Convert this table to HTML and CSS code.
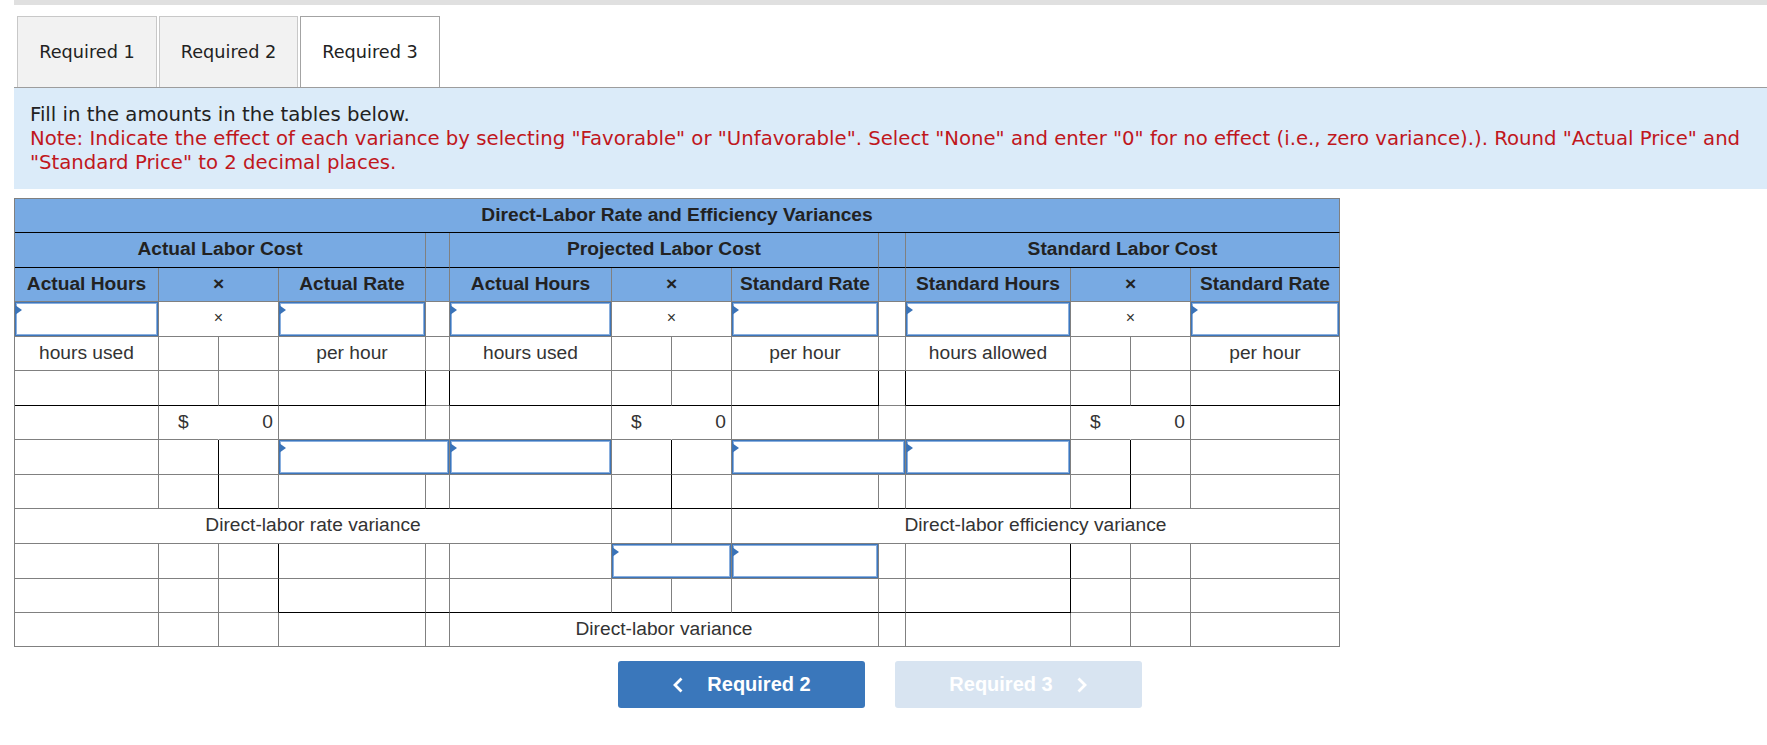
FILE: index.html
```html
<!DOCTYPE html>
<html>
<head>
<meta charset="utf-8">
<link rel="stylesheet" href="styles.css">
</head>
<body>
<div class="page">
  <div class="topbar"></div>
  <div class="tabs">
    <div class="tab">Required 1</div>
    <div class="tab">Required 2</div>
    <div class="tab active">Required 3</div>
  </div>
  <div class="info">
    <p class="lead">Fill in the amounts in the tables below.</p>
    <p class="note">Note: Indicate the effect of each variance by selecting "Favorable" or "Unfavorable". Select "None" and enter "0" for no effect (i.e., zero variance).). Round "Actual Price" and "Standard Price" to 2 decimal places.</p>
  </div>

  <div class="grid">
    <!-- row 1 -->
    <div class="c h span14 bb">Direct-Labor Rate and Efficiency Variances</div>
    <!-- row 2 -->
    <div class="c h span4 bb">Actual Labor Cost</div>
    <div class="c h bb"></div>
    <div class="c h span4 bb">Projected Labor Cost</div>
    <div class="c h bb"></div>
    <div class="c h span4 bb">Standard Labor Cost</div>
    <!-- row 3 -->
    <div class="c h">Actual Hours</div>
    <div class="c h span2">×</div>
    <div class="c h">Actual Rate</div>
    <div class="c h"></div>
    <div class="c h">Actual Hours</div>
    <div class="c h span2">×</div>
    <div class="c h">Standard Rate</div>
    <div class="c h"></div>
    <div class="c h">Standard Hours</div>
    <div class="c h span2">×</div>
    <div class="c h">Standard Rate</div>
    <!-- row 4 -->
    <div class="c"><div class="inp"></div></div>
    <div class="c span2 x">×</div>
    <div class="c"><div class="inp"></div></div>
    <div class="c"></div>
    <div class="c"><div class="inp"></div></div>
    <div class="c span2 x">×</div>
    <div class="c"><div class="inp"></div></div>
    <div class="c"></div>
    <div class="c"><div class="inp"></div></div>
    <div class="c span2 x">×</div>
    <div class="c"><div class="inp"></div></div>
    <!-- row 5 -->
    <div class="c">hours used</div>
    <div class="c"></div>
    <div class="c"></div>
    <div class="c">per hour</div>
    <div class="c"></div>
    <div class="c">hours used</div>
    <div class="c"></div>
    <div class="c"></div>
    <div class="c">per hour</div>
    <div class="c"></div>
    <div class="c">hours allowed</div>
    <div class="c"></div>
    <div class="c"></div>
    <div class="c">per hour</div>
    <!-- row 6 -->
    <div class="c bb"></div>
    <div class="c bb"></div>
    <div class="c bb"></div>
    <div class="c bb br"></div>
    <div class="c br"></div>
    <div class="c bb"></div>
    <div class="c bb"></div>
    <div class="c bb"></div>
    <div class="c bb br"></div>
    <div class="c br"></div>
    <div class="c bb"></div>
    <div class="c bb"></div>
    <div class="c bb"></div>
    <div class="c bb br"></div>
    <!-- row 7 -->
    <div class="c"></div>
    <div class="c dollar nor">$</div>
    <div class="c num">0</div>
    <div class="c"></div>
    <div class="c"></div>
    <div class="c"></div>
    <div class="c dollar nor">$</div>
    <div class="c num">0</div>
    <div class="c"></div>
    <div class="c"></div>
    <div class="c"></div>
    <div class="c dollar nor">$</div>
    <div class="c num">0</div>
    <div class="c"></div>
    <!-- row 8 -->
    <div class="c"></div>
    <div class="c br"></div>
    <div class="c"></div>
    <div class="c span2"><div class="inp"></div></div>
    <div class="c"><div class="inp"></div></div>
    <div class="c br"></div>
    <div class="c"></div>
    <div class="c span2"><div class="inp"></div></div>
    <div class="c"><div class="inp"></div></div>
    <div class="c br"></div>
    <div class="c"></div>
    <div class="c"></div>
    <!-- row 9 -->
    <div class="c"></div>
    <div class="c br"></div>
    <div class="c bb"></div>
    <div class="c bb"></div>
    <div class="c bb"></div>
    <div class="c bb"></div>
    <div class="c bb br"></div>
    <div class="c bb"></div>
    <div class="c bb"></div>
    <div class="c bb"></div>
    <div class="c bb"></div>
    <div class="c bb br"></div>
    <div class="c"></div>
    <div class="c"></div>
    <!-- row 10 -->
    <div class="c span6">Direct-labor rate variance</div>
    <div class="c"></div>
    <div class="c"></div>
    <div class="c span6">Direct-labor efficiency variance</div>
    <!-- row 11 -->
    <div class="c"></div>
    <div class="c"></div>
    <div class="c br"></div>
    <div class="c"></div>
    <div class="c"></div>
    <div class="c"></div>
    <div class="c span2"><div class="inp"></div></div>
    <div class="c"><div class="inp"></div></div>
    <div class="c"></div>
    <div class="c br"></div>
    <div class="c"></div>
    <div class="c"></div>
    <div class="c"></div>
    <!-- row 12 -->
    <div class="c"></div>
    <div class="c"></div>
    <div class="c br"></div>
    <div class="c bb"></div>
    <div class="c bb"></div>
    <div class="c bb"></div>
    <div class="c bb"></div>
    <div class="c bb"></div>
    <div class="c bb"></div>
    <div class="c bb"></div>
    <div class="c bb br"></div>
    <div class="c"></div>
    <div class="c"></div>
    <div class="c"></div>
    <!-- row 13 -->
    <div class="c"></div>
    <div class="c"></div>
    <div class="c"></div>
    <div class="c"></div>
    <div class="c"></div>
    <div class="c span4">Direct-labor variance</div>
    <div class="c"></div>
    <div class="c"></div>
    <div class="c"></div>
    <div class="c"></div>
    <div class="c"></div>
  </div>

  <div class="nav">
    <button class="btn prev">
      <svg class="chev" width="12" height="18" viewBox="0 0 12 18"><polyline points="9.5,2.5 3,9 9.5,15.5" fill="none" stroke="#fff" stroke-width="2.8"/></svg>
      <span>Required 2</span>
    </button>
    <button class="btn next">
      <span>Required 3</span>
      <svg class="chev" width="12" height="18" viewBox="0 0 12 18"><polyline points="2.5,2.5 9,9 2.5,15.5" fill="none" stroke="#fff" stroke-width="2.8"/></svg>
    </button>
  </div>
</div>
</body>
</html>
```

FILE: styles.css
```css
html, body {
  margin: 0;
  padding: 0;
  background: #fff;
}

body {
  font-family: "Liberation Sans", Arial, sans-serif;
  color: #333;
}

.page {
  padding-left: 14px;
}

.topbar {
  height: 5px;
  background: #e0e0e0;
}

.tabs {
  display: flex;
  gap: 2px;
  padding: 11px 0 0 3px;
  border-bottom: 1px solid #9d9d9d;
}

.tab {
  box-sizing: border-box;
  width: 140px;
  height: 71px;
  border: 1px solid #c8c8c8;
  border-bottom: none;
  background: #f2f2f2;
  display: flex;
  align-items: center;
  justify-content: center;
  font-family: "DejaVu Sans", Verdana, sans-serif;
  font-size: 17.7px;
  color: #222;
}

.tab:nth-child(2) {
  width: 139px;
}

.tab.active {
  background: #fff;
  border-color: #a3a3a3;
}

.info {
  background: #dbebf9;
  padding: 15px 8px 14px 16px;
  font-family: "DejaVu Sans", Verdana, sans-serif;
  font-size: 19.7px;
  line-height: 24px;
}

.info p {
  margin: 0;
}

.lead {
  color: #222;
}

.note {
  color: #c0171d;
}

.grid {
  display: grid;
  box-sizing: border-box;
  width: 1326px;
  margin-top: 9px;
  border-top: 1px solid #808080;
  border-left: 1px solid #808080;
  grid-template-columns: 144px 60px 60px 147px 24px 162px 60px 60px 147px 27px 165px 60px 60px 149px;
  grid-template-rows: 34px 35px 34px 35px 34px 35px 34px 35px 34px 35px 35px 34px 34px;
}

.c {
  box-sizing: border-box;
  border-right: 1px solid #808080;
  border-bottom: 1px solid #808080;
  display: flex;
  align-items: center;
  justify-content: center;
  padding-bottom: 2px;
  font-size: 19.2px;
  color: #333;
  white-space: nowrap;
  min-width: 0;
}

.h {
  background: #78aae3;
  font-weight: bold;
  color: #222;
}

.bb {
  border-bottom-color: #000;
}

.br {
  border-right-color: #000;
}

.nor {
  border-right-color: transparent;
}

.span2 { grid-column: span 2; }
.span4 { grid-column: span 4; }
.span6 { grid-column: span 6; }
.span14 { grid-column: span 14; }

.x {
  font-size: 16px;
}

.dollar {
  justify-content: flex-start;
  padding-left: 19px;
}

.num {
  justify-content: flex-end;
  padding-right: 5px;
}

.inp {
  position: relative;
  align-self: stretch;
  flex: 1;
  box-sizing: border-box;
  margin-bottom: -2px;
  background: #fff;
  border: 1px solid #3e76ba;
  box-shadow: inset 0 0 0 1px #89afdf;
}

.inp::before {
  content: "";
  position: absolute;
  left: -1px;
  top: 2px;
  border-left: 7px solid #3a73b8;
  border-top: 5px solid transparent;
  border-bottom: 5px solid transparent;
}

.nav {
  display: flex;
  justify-content: center;
  gap: 30px;
  width: 1732px;
  margin-top: 14px;
}

.btn {
  box-sizing: border-box;
  width: 247px;
  height: 47px;
  border: none;
  border-radius: 3px;
  display: flex;
  align-items: center;
  justify-content: center;
  gap: 23px;
  font-family: "Liberation Sans", Arial, sans-serif;
  font-weight: bold;
  font-size: 20px;
  color: #fff;
  padding: 0;
}

.prev {
  background: #3a77bb;
}

.next {
  background: #d8e4f1;
}

.chev {
  display: block;
}
```
